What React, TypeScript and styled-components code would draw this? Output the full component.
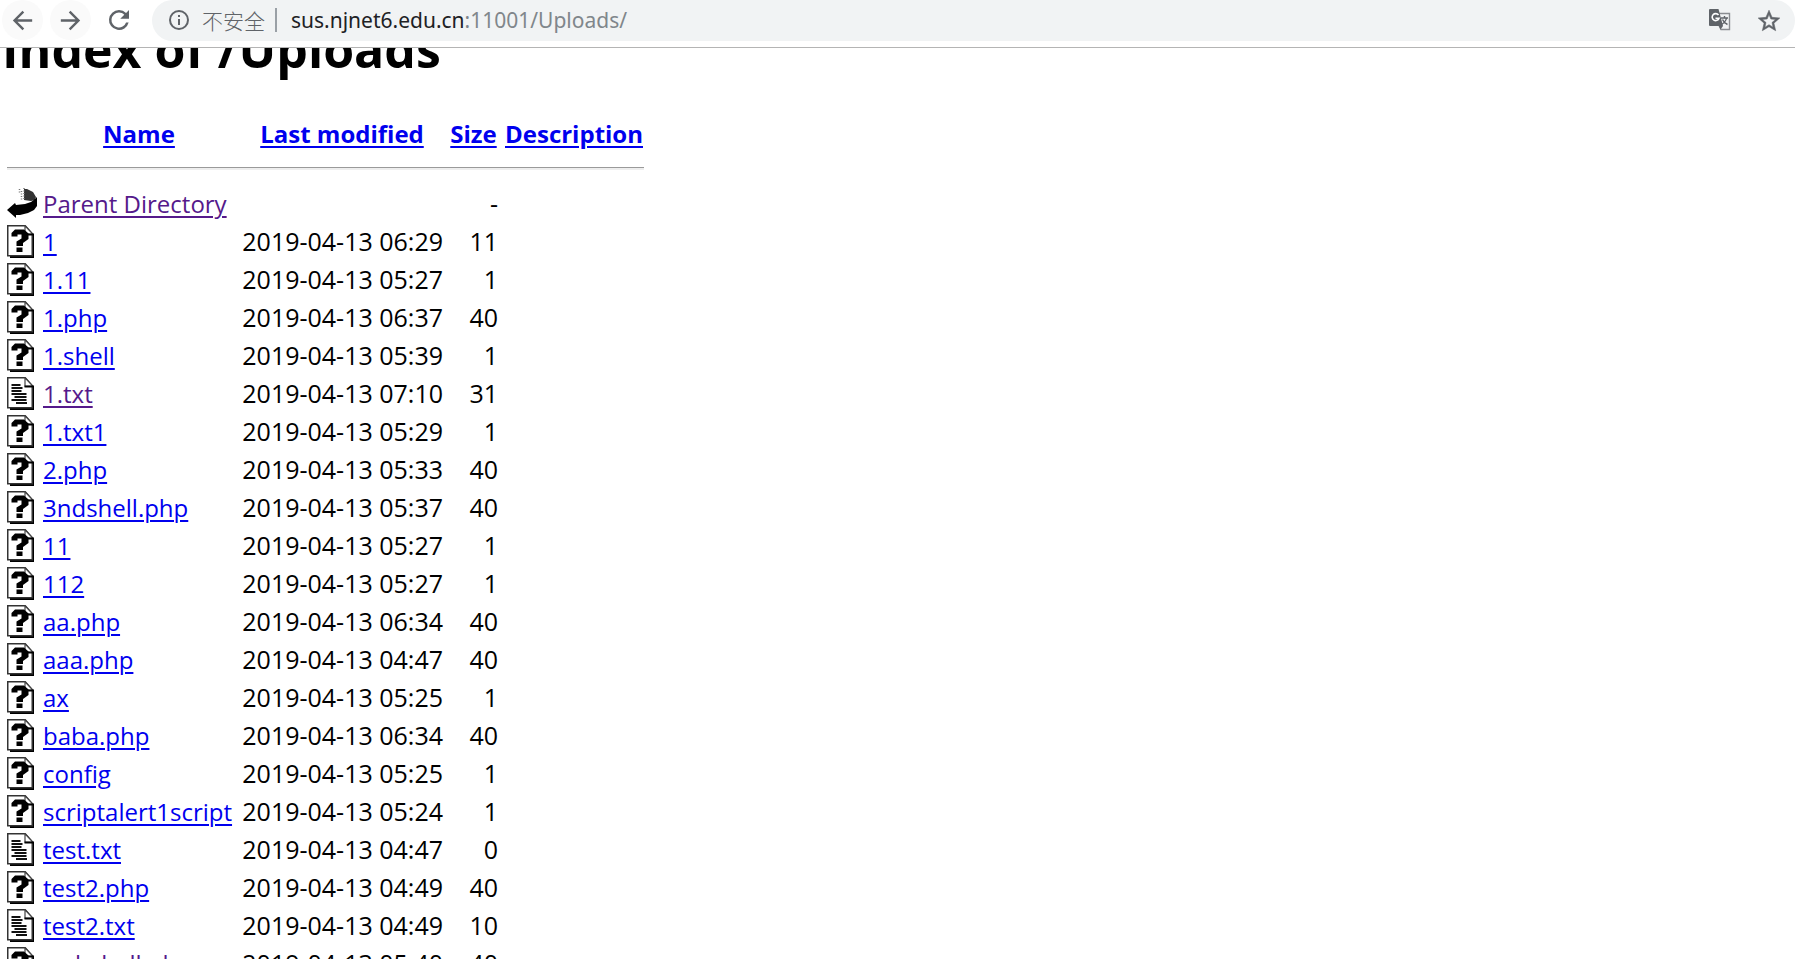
import React from "react";
import styled, { createGlobalStyle } from "styled-components";

const textFont = `"Open Sans", "Noto Sans CJK SC", sans-serif`;

const GlobalStyle = createGlobalStyle`
  *, *::before, *::after { box-sizing: border-box; }
  html, body { margin: 0; background: #fff; }
  body { font-family: ${textFont}; font-size: 25px; color: #000; overflow: hidden; }
`;

const Window = styled.div`
  display: flex;
  flex-direction: column;
  height: 100vh;
  overflow: hidden;
`;

const Toolbar = styled.header`
  display: flex;
  align-items: flex-start;
  gap: 7px;
  flex: none;
  height: 48px;
  padding-left: 2px;
  background: #fff;
  border-bottom: 1px solid #b4b4b4;
`;

const NavButton = styled.button<{ $tinted?: boolean }>`
  display: grid;
  place-items: center;
  flex: none;
  width: 41px;
  height: 40px;
  padding: 0;
  border: 0;
  border-radius: 50%;
  background: ${(p) => (p.$tinted ? "#fafafa" : "transparent")};
  color: #5f6368;
`;

const AddressBar = styled.div`
  display: flex;
  align-items: center;
  flex: 1;
  min-width: 0;
  height: 41px;
  margin-left: 6px;
  padding: 0 15px 2px 15px;
  border-radius: 21px;
  background: #f1f3f4;
`;

const SecurityButton = styled.button`
  display: flex;
  align-items: center;
  gap: 11px;
  padding: 0;
  border: 0;
  background: none;
  color: #5f6368;
  font: 300 21px/24px "Noto Sans CJK SC", sans-serif;
`;

const Divider = styled.span`
  width: 2px;
  height: 24px;
  margin: 0 14px 0 10px;
  background: #9aa0a6;
`;

const Address = styled.a`
  flex: 1;
  min-width: 0;
  color: #80868b;
  font-family: "Noto Sans", sans-serif;
  font-size: 21px;
  line-height: 32px;
  text-decoration: none;
  white-space: nowrap;
`;

const Host = styled.span`
  color: #202124;
`;

const BarActions = styled.div`
  display: flex;
  gap: 24px;
`;

const BarButton = styled.button`
  display: grid;
  place-items: center;
  width: 24px;
  height: 24px;
  padding: 0;
  border: 0;
  background: none;
  color: #5f6368;
`;

const Viewport = styled.main`
  flex: 1;
  min-height: 0;
  overflow: hidden;
`;

const Listing = styled.article`
  margin-top: -34px;
`;

const Title = styled.h1`
  margin: 0 0 28px 2px;
  font-size: 50px;
  line-height: 70px;
  white-space: nowrap;
`;

const FileTable = styled.table`
  table-layout: fixed;
  width: 643px;
  margin-left: 1px;
  border-spacing: 6px 5px;
  line-height: 33px;
`;

const Column = styled.col<{ $width: number }>`
  width: ${(p) => p.$width}px;
`;

const HeadCell = styled.th`
  height: 33px;
  padding: 0;
  font-size: 24px;
  text-align: center;
  white-space: nowrap;
`;

const Cell = styled.td<{ $right?: boolean }>`
  height: 33px;
  padding: 0;
  text-align: ${(p) => (p.$right ? "right" : "left")};
  white-space: nowrap;
`;

const NameCell = styled(Cell)`
  font-size: 24px;
`;

const RuleCell = styled.td`
  padding: 12px 0;
`;

const Rule = styled.hr`
  height: 3px;
  margin: 0;
  border: 0;
  border-top: 1px solid #9a9a9a;
  background: #eee;
`;

const FileLink = styled.a<{ $visited?: boolean }>`
  color: ${(p) => (p.$visited ? "#551a8b" : "#0000ee")};
  text-decoration: underline;
  text-decoration-thickness: 2px;
  text-underline-offset: 3px;
  text-decoration-skip-ink: auto;
`;

const Glyph = styled.svg`
  display: block;
`;

type Kind = "back" | "unknown" | "text";

const BackIcon = () => (
  <Glyph width="30" height="33" viewBox="0 0 30 33" role="img" aria-label="Parent directory">
    <path d="M17 2h3l6 3 3 5-1 3-4 1-7-1z" fill="#333" />
    <path d="M12.500 2v4M14.500 4v9M17 1v12" stroke="#777" strokeWidth="1.500" strokeDasharray="1 1.500" />
    <path d="M30 10v9l-3 4-6 3-8 2H9v3l-9-8 8-7 1 2 9-1 6-2 4-3z" fill="#000" />
  </Glyph>
);

const Sheet = () => (
  <>
    <path d="M3 32h23V9" fill="none" stroke="#000" strokeWidth="2" />
    <path d="M.75.75h17.500l7 8V30.700H.75z" fill="#fff" stroke="#333" strokeWidth="1.500" />
    <path d="M18 .75v8.500h8z" fill="#fff" stroke="#444" strokeWidth="1.200" />
    <path d="M17.500 9.500H27" stroke="#000" strokeWidth="2" />
  </>
);

const UnknownIcon = () => (
  <Glyph width="27" height="33" viewBox="0 0 27 33" role="img" aria-label="Unknown file">
    <Sheet />
    <path d="M4.500 11.500V8L8 4.500h9l4.500 4V14L16 18v3H9.500v-4.500l5-3V9.500h-4v2z" />
    <path d="M9.500 22.500h6V27h-6z" />
  </Glyph>
);

const TextIcon = () => (
  <Glyph width="27" height="33" viewBox="0 0 27 33" role="img" aria-label="Text file">
    <Sheet />
    <path
      d="M4.500 8h9M4.500 11h11M4.500 14h10M4.500 17h15M7.500 20h12M4.500 23h15M9 26h11"
      stroke="#111"
      strokeWidth="1.800"
    />
  </Glyph>
);

const icons: Record<Kind, () => React.JSX.Element> = {
  back: BackIcon,
  unknown: UnknownIcon,
  text: TextIcon,
};

type Entry = { name: string; date: string; size: string; kind?: Kind; visited?: boolean };

const entries: Entry[] = [
  { name: "Parent Directory", date: "", size: "-", kind: "back", visited: true },
  { name: "1", date: "2019-04-13 06:29", size: "11" },
  { name: "1.11", date: "2019-04-13 05:27", size: "1" },
  { name: "1.php", date: "2019-04-13 06:37", size: "40" },
  { name: "1.shell", date: "2019-04-13 05:39", size: "1" },
  { name: "1.txt", date: "2019-04-13 07:10", size: "31", kind: "text", visited: true },
  { name: "1.txt1", date: "2019-04-13 05:29", size: "1" },
  { name: "2.php", date: "2019-04-13 05:33", size: "40" },
  { name: "3ndshell.php", date: "2019-04-13 05:37", size: "40" },
  { name: "11", date: "2019-04-13 05:27", size: "1" },
  { name: "112", date: "2019-04-13 05:27", size: "1" },
  { name: "aa.php", date: "2019-04-13 06:34", size: "40" },
  { name: "aaa.php", date: "2019-04-13 04:47", size: "40" },
  { name: "ax", date: "2019-04-13 05:25", size: "1" },
  { name: "baba.php", date: "2019-04-13 06:34", size: "40" },
  { name: "config", date: "2019-04-13 05:25", size: "1" },
  { name: "scriptalert1script", date: "2019-04-13 05:24", size: "1" },
  { name: "test.txt", date: "2019-04-13 04:47", size: "0", kind: "text" },
  { name: "test2.php", date: "2019-04-13 04:49", size: "40" },
  { name: "test2.txt", date: "2019-04-13 04:49", size: "10", kind: "text" },
  { name: "webshell.php", date: "2019-04-13 05:40", size: "40", visited: true },
];

const headings = ["Name", "Last modified", "Size", "Description"];
const columnWidths = [30, 192, 202, 49, 140];

const FileRow = ({ name, date, size, kind = "unknown", visited }: Entry) => {
  const Icon = icons[kind];
  return (
    <tr>
      <Cell><Icon /></Cell>
      <NameCell><FileLink href="#" $visited={visited}>{name}</FileLink></NameCell>
      <Cell $right>{date}</Cell>
      <Cell $right>{size}</Cell>
      <Cell />
    </tr>
  );
};

export default function App() {
  return (
    <Window>
      <GlobalStyle />
      <Toolbar>
        <NavButton $tinted aria-label="Back">
          <Glyph width="29" height="29" viewBox="0 0 24 24" fill="currentColor">
            <path d="M20 11H7.830l5.590-5.590L12 4l-8 8 8 8 1.410-1.410L7.830 13H20z" />
          </Glyph>
        </NavButton>
        <NavButton $tinted aria-label="Forward">
          <Glyph width="29" height="29" viewBox="0 0 24 24" fill="currentColor">
            <path d="M12 4l-1.410 1.410L16.170 11H4v2h12.170l-5.580 5.590L12 20l8-8z" />
          </Glyph>
        </NavButton>
        <NavButton aria-label="Reload">
          <Glyph width="30" height="30" viewBox="0 0 24 24" fill="currentColor">
            <path d="M17.650 6.350A7.960 7.960 0 0 0 12 4a8 8 0 1 0 7.730 10h-2.080A6 6 0 1 1 12 6c1.660 0 3.140.690 4.220 1.780L13 11h7V4z" />
          </Glyph>
        </NavButton>
        <AddressBar>
          <SecurityButton>
            <Glyph width="24" height="24" viewBox="0 0 24 24" fill="currentColor">
              <path d="M11 7h2v2h-2zm0 4h2v6h-2zm1-9a10 10 0 1 0 0 20 10 10 0 0 0 0-20zm0 18a8 8 0 1 1 0-16 8 8 0 0 1 0 16z" />
            </Glyph>
            不安全
          </SecurityButton>
          <Divider />
          <Address href="#"><Host>sus.njnet6.edu.cn</Host>:11001/Uploads/</Address>
          <BarActions>
            <BarButton aria-label="Translate this page">
              <Glyph width="24" height="24" viewBox="0 0 24 24">
                <path d="M11 5.500h10.500v16H13l-2-4" fill="#f1f3f4" stroke="#8a8d91" strokeWidth="1.400" />
                <path d="M13 10h7M16.500 8v2M18.500 10c-.5 3-2.500 5-5 6.500M14.500 11.500c1 2.500 3 4 5 5" fill="none" stroke="#5f6368" strokeWidth="1.400" />
                <path d="M2 1h8.500l4.500 17H2a1 1 0 0 1-1-1V2a1 1 0 0 1 1-1z" fill="#5f6368" />
                <path d="M10.500 7A3.500 3.500 0 1 0 11 10.200H7.500" fill="none" stroke="#fff" strokeWidth="1.600" />
                <path d="M11 18h4l-2.500 3.500z" fill="#5f6368" />
              </Glyph>
            </BarButton>
            <BarButton aria-label="Bookmark this page">
              <Glyph width="26" height="26" viewBox="0 0 24 24" fill="currentColor" stroke="currentColor" strokeWidth="0.500">
                <path d="M22 9.240l-7.190-.620L12 2 9.190 8.630 2 9.240l5.460 4.730L5.820 21 12 17.270 18.180 21l-1.630-7.030zM12 15.400l-3.760 2.270 1-4.280-3.320-2.880 4.380-.380L12 6.100l1.710 4.040 4.380.380-3.320 2.880 1 4.280z" />
              </Glyph>
            </BarButton>
          </BarActions>
        </AddressBar>
      </Toolbar>
      <Viewport>
        <Listing>
          <Title>Index of /Uploads</Title>
          <FileTable>
            <colgroup>
              {columnWidths.map((w, i) => <Column key={i} $width={w} />)}
            </colgroup>
            <thead>
              <tr>
                <Cell />
                {headings.map((h) => (
                  <HeadCell key={h} scope="col"><FileLink href="#">{h}</FileLink></HeadCell>
                ))}
              </tr>
              <tr>
                <RuleCell colSpan={5}><Rule /></RuleCell>
              </tr>
            </thead>
            <tbody>
              {entries.map((e) => <FileRow key={e.name} {...e} />)}
            </tbody>
          </FileTable>
        </Listing>
      </Viewport>
    </Window>
  );
}
